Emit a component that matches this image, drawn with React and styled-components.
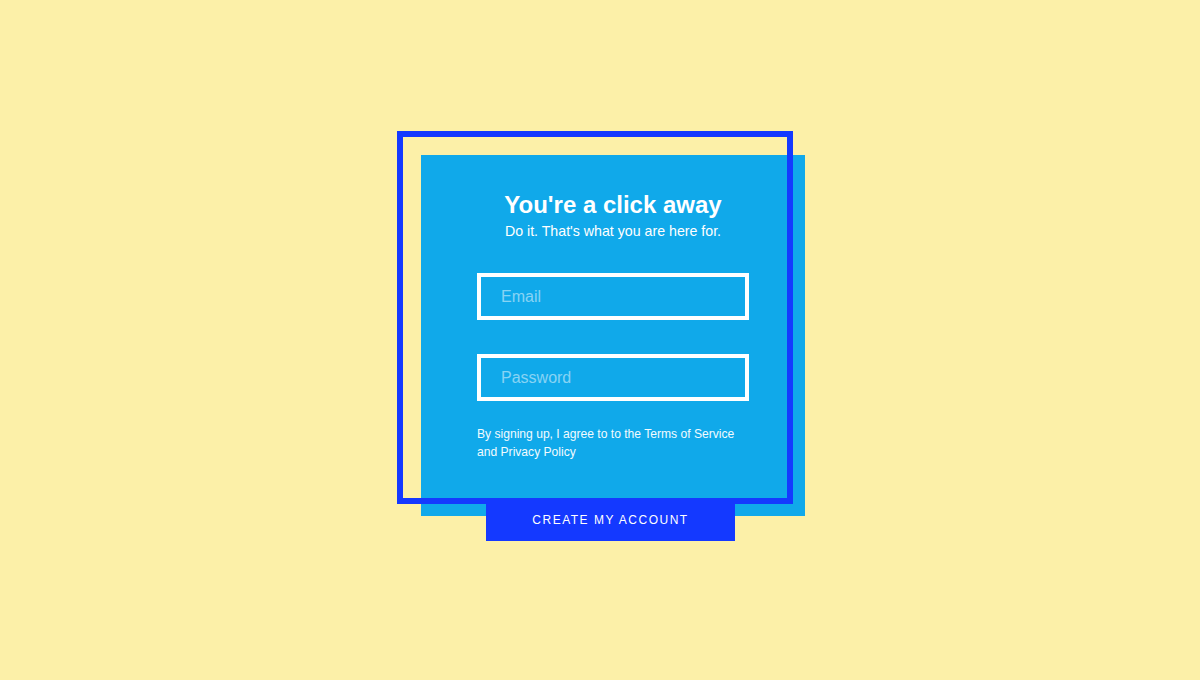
import React from "react";
import styled, { createGlobalStyle } from "styled-components";

const GlobalStyle = createGlobalStyle`
  html, body {
    margin: 0;
    padding: 0;
    background: #fcf0a8;
    font-family: "Liberation Sans", Arial, sans-serif;
  }
  * {
    box-sizing: border-box;
  }
`;

const Page = styled.div`
  min-height: 100vh;
  display: flex;
  align-items: center;
  justify-content: center;
  padding: 0 0 33px 2px;
`;

const Wrapper = styled.div`
  padding: 24px 0 0 24px;
`;

const Card = styled.form`
  position: relative;
  width: 384px;
  background: #10a9ea;
  padding-top: 36px;
  display: flex;
  flex-direction: column;
  align-items: center;
  color: #fff;
`;

// decorative outline sitting over the card, offset up-left
const Frame = styled.div`
  position: absolute;
  top: -24px;
  left: -24px;
  width: 396px;
  height: 373px;
  border: 6px solid #1439ff;
  pointer-events: none;
`;

const Title = styled.h1`
  margin: 0 0 4px;
  font-size: 24px;
  line-height: 28px;
  font-weight: 700;
`;

const Subtitle = styled.p`
  margin: 0 0 34px;
  font-size: 14.2px;
  line-height: 16px;
`;

const Input = styled.input`
  width: 272px;
  height: 47px;
  margin-bottom: ${(p) => p.$gap || 0}px;
  border: 4px solid #fff;
  background: transparent;
  padding: 0 20px;
  font-family: inherit;
  font-size: 16px;
  color: #fff;
  outline: none;

  &::placeholder {
    color: rgba(255, 255, 255, 0.5);
  }
`;

const Terms = styled.p`
  width: 272px;
  margin: 24px 0 0;
  font-size: 12.1px;
  line-height: 18px;
  color: #f2fbff;
`;

const Button = styled.button`
  position: relative;
  z-index: 2;
  width: 249px;
  height: 43px;
  margin: 37px 0 -25px -5px;
  border: none;
  background: #1439ff;
  color: #fff;
  font-family: inherit;
  font-size: 12px;
  letter-spacing: 1.5px;
  text-transform: uppercase;
  cursor: pointer;
`;

export default function App() {
  return (
    <>
      <GlobalStyle />
      <Page>
        <Wrapper>
          <Card onSubmit={(e) => e.preventDefault()}>
            <Frame />
            <Title>You're a click away</Title>
            <Subtitle>Do it. That's what you are here for.</Subtitle>
            <Input type="email" placeholder="Email" $gap={34} />
            <Input type="password" placeholder="Password" />
            <Terms>
              By signing up, I agree to to the Terms of Service and Privacy
              Policy
            </Terms>
            <Button type="submit">Create my account</Button>
          </Card>
        </Wrapper>
      </Page>
    </>
  );
}
